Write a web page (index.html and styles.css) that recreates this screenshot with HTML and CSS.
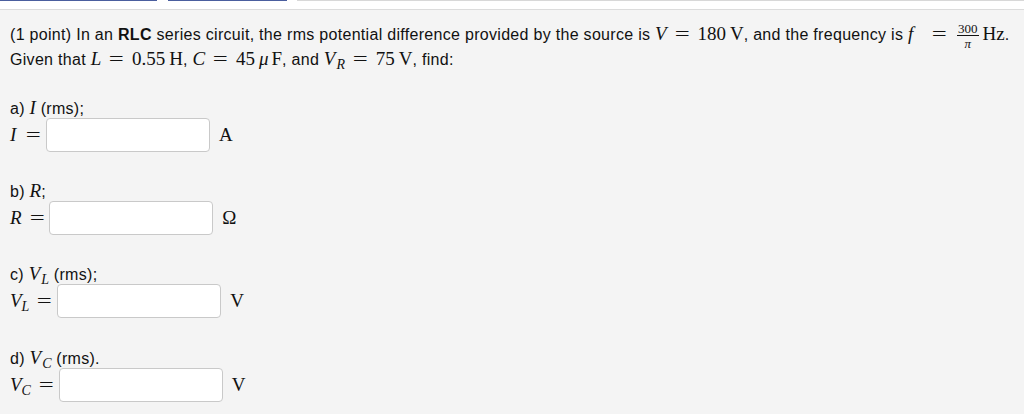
FILE: index.html
```html
<!DOCTYPE html>
<html>
<head>
<meta charset="utf-8">
<link rel="stylesheet" href="styles.css">
</head>
<body>
<div class="tabs">
  <span class="tab tab-blue tab-1"></span>
  <span class="tab tab-blue tab-2"></span>
  <span class="tab tab-grey"></span>
</div>
<div class="problem">
  <div class="intro">
    <div class="line">(1 point) In an <b>RLC</b> series circuit, the rms potential difference provided by the source is <span class="m"><i>V</i><span class="rel">=</span>180<span class="thin"></span>V</span>, and the frequency is <span class="m"><i class="ic">f</i><span class="rel">=</span><span class="frac"><span class="num">300</span><span class="den"><i>π</i></span></span><span class="thin"></span>Hz</span>.</div>
    <div class="line">Given that <span class="m"><i>L</i><span class="rel">=</span>0.55<span class="thin"></span>H</span>, <span class="m"><i>C</i><span class="rel">=</span>45<span class="thin"></span><i class="mu">μ</i>F</span>, and <span class="m"><i>V</i><sub><i>R</i></sub><span class="rel">=</span>75<span class="thin"></span>V</span>, find:</div>
  </div>

  <div class="part part-a">
    <div class="q">a) <span class="m"><i>I</i></span> (rms);</div>
    <div class="ans"><span class="m lhs"><i class="ivar">I</i><span class="rel">=</span></span><span class="box"></span><span class="m unit">A</span></div>
  </div>
  <div class="part part-b">
    <div class="q">b) <span class="m"><i>R</i></span>;</div>
    <div class="ans"><span class="m lhs"><i>R</i><span class="rel">=</span></span><span class="box"></span><span class="m unit">Ω</span></div>
  </div>
  <div class="part part-c">
    <div class="q">c) <span class="m"><i>V</i><sub><i>L</i></sub></span> (rms);</div>
    <div class="ans"><span class="m lhs"><i>V</i><sub><i>L</i></sub><span class="rel">=</span></span><span class="box"></span><span class="m unit">V</span></div>
  </div>
  <div class="part part-d">
    <div class="q">d) <span class="m"><i>V</i><sub><i>C</i></sub></span> (rms).</div>
    <div class="ans"><span class="m lhs"><i>V</i><sub><i>C</i></sub><span class="rel">=</span></span><span class="box"></span><span class="m unit">V</span></div>
  </div>
</div>
</body>
</html>
```
FILE: styles.css
```css
html, body {
  margin: 0;
  padding: 0;
  background: #f4f4f4;
  height: 100%;
}
body {
  font-family: "Liberation Sans", Arial, sans-serif;
  font-size: 16px;
  letter-spacing: 0.3px;
  color: #111111;
}
.tabs {
  height: 9px;
  background: #ffffff;
  border-bottom: 1px solid #dcdcdc;
  display: flex;
  align-items: flex-start;
}
.tab {
  display: block;
  height: 1px;
}
.tab-blue {
  background: #4a5e9e;
}
.tab-1 { width: 157px; }
.tab-2 { width: 119px; margin-left: 11px; }
.tab-grey {
  flex: 1;
  margin-left: 10px;
  background: #d8d8d8;
}
.problem {
  padding: 11px 10px 0 10px;
}
.intro .line {
  height: 25px;
  line-height: 25px;
  white-space: nowrap;
}
.m {
  font-family: "Liberation Serif", "Times New Roman", serif;
  font-size: 19px;
  letter-spacing: 0;
}
.m i {
  font-style: italic;
}
.m i.ic {
  margin-right: 11px;
}
.m i.mu {
  margin-right: 3px;
}
.m i.ivar {
  margin-right: 2px;
}
.rel {
  display: inline-block;
  margin: 0 10px;
  transform: scaleX(1.4);
}
.thin {
  display: inline-block;
  width: 4px;
}
sub {
  font-size: 14px;
  vertical-align: -4px;
  line-height: 0;
  margin-left: 1px;
}
.lhs sub {
  margin-left: 0;
}
.frac {
  display: inline-flex;
  flex-direction: column;
  align-items: center;
  vertical-align: 7px;
  line-height: 11px;
  font-size: 13px;
  margin: 0 0 0 2px;
}
.frac .num {
  border-bottom: 1px solid #111111;
  padding: 0 1px 1px;
}
.frac .den {
  padding-top: 2px;
}
.part {
  height: 83px;
}
.part-a { margin-top: 27px; }
.part-c { height: 84px; }
.q {
  line-height: 20px;
  height: 20px;
}
.ans {
  display: flex;
  align-items: center;
  margin-top: 0;
  line-height: 20px;
}
.lhs {
  display: block;
  white-space: nowrap;
}
.lhs .rel {
  margin-right: 7px;
}
.box {
  display: block;
  box-sizing: border-box;
  width: 164px;
  height: 34px;
  background: #ffffff;
  border: 1px solid #c9c9c9;
  border-radius: 4px;
}
.unit {
  margin-left: 9px;
}
```
